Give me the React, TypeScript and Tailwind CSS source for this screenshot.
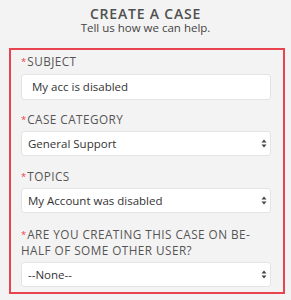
import React from "react";

const font = { fontFamily: '"Open Sans", "Noto Sans", sans-serif' };

function Arrows() {
  return (
    <svg width="6" height="11" viewBox="0 0 6 11" className="shrink-0">
      <path d="M3 1.5 L5.5 4.5 L0.5 4.5 Z" fill="#444" />
      <path d="M3 9.5 L5.5 6.5 L0.5 6.5 Z" fill="#444" />
    </svg>
  );
}

function Label({ children }: { children: React.ReactNode }) {
  return (
    <div className="text-[11.75px] leading-[16px] tracking-[0.45px] text-[#555]">
      <span className="relative -top-[1px] mr-[1px] text-[9.5px] leading-none tracking-normal text-[#e8434f]">*</span>
      {children}
    </div>
  );
}

function Select({ value }: { value: string }) {
  return (
    <div className="mt-[4px] flex h-[25px] w-[250px] items-center justify-between rounded-[3px] border border-[#e4e4e4] bg-white pl-[6px] pr-[3px] text-[11.5px] text-[#333]">
      <span>{value}</span>
      <Arrows />
    </div>
  );
}

export default function App() {
  return (
    <div className="h-[300px] w-[291px] bg-[#f4f3f3] pt-[6px]" style={font}>
      <div className="text-center text-[14px] font-semibold leading-[15px] tracking-[0.8px] text-[#505050]">
        CREATE A CASE
      </div>
      <div className="text-center text-[11.5px] leading-[14px] text-[#444]">
        Tell us how we can help.
      </div>
      <div className="ml-[9px] mt-[13px] w-[276px] border-2 border-[#e8434f] pb-[5px] pl-[10px] pt-[3px]">
        <Label>SUBJECT</Label>
        <div className="mt-[5px] flex h-[26px] w-[250px] items-center rounded-[3px] border border-[#e4e4e4] bg-white pl-[10px] text-[11.5px] text-[#333]">
          My acc is disabled
        </div>
        <div className="mt-[11px]">
          <Label>CASE CATEGORY</Label>
        </div>
        <div className="mt-[1px]">
          <Select value="General Support" />
        </div>
        <div className="mt-[12px]">
          <Label>TOPICS</Label>
        </div>
        <Select value="My Account was disabled" />
        <div className="mt-[13px]">
          <Label>
            ARE YOU CREATING THIS CASE ON BE-
            <br />
            HALF OF SOME OTHER USER?
          </Label>
        </div>
        <Select value="--None--" />
      </div>
    </div>
  );
}
